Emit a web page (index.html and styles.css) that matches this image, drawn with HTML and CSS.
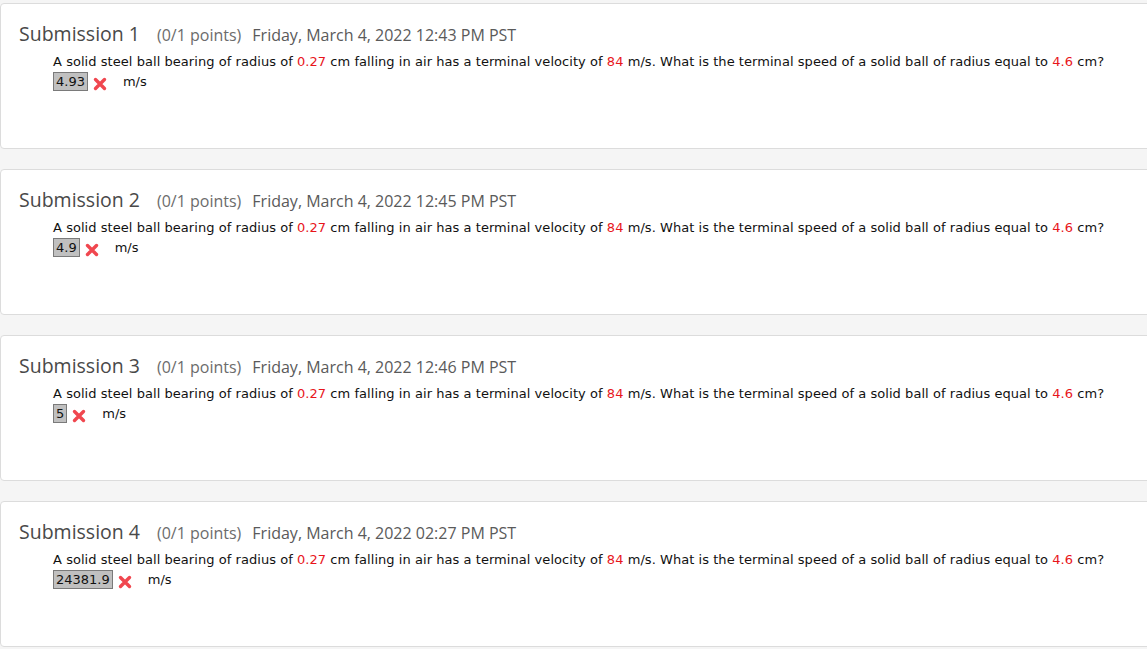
FILE: index.html
```html
<!DOCTYPE html>
<html>
<head>
<meta charset="utf-8">
<link rel="stylesheet" href="styles.css">
</head>
<body>
<div class="list">
  <div class="card">
    <div class="head"><span class="title">Submission 1</span><span class="pts">(0/1 points)</span><span class="date">Friday, March 4, 2022 12:43 PM PST</span></div>
    <div class="q">A solid steel ball bearing of radius of <span class="v">0.27</span> cm falling in air has a terminal velocity of <span class="v">84</span> m/s. What is the terminal speed of a solid ball of radius equal to <span class="v">4.6</span> cm?</div>
    <div class="ans"><span class="box">4.93</span><svg class="x" viewBox="0 0 14 14" width="14" height="14"><path d="M2.5 2.5 L11.5 11.5 M11.5 2.5 L2.5 11.5" stroke="#f0474f" stroke-width="3.4" stroke-linecap="round"/></svg><span class="unit">m/s</span></div>
  </div>
  <div class="card">
    <div class="head"><span class="title">Submission 2</span><span class="pts">(0/1 points)</span><span class="date">Friday, March 4, 2022 12:45 PM PST</span></div>
    <div class="q">A solid steel ball bearing of radius of <span class="v">0.27</span> cm falling in air has a terminal velocity of <span class="v">84</span> m/s. What is the terminal speed of a solid ball of radius equal to <span class="v">4.6</span> cm?</div>
    <div class="ans"><span class="box">4.9</span><svg class="x" viewBox="0 0 14 14" width="14" height="14"><path d="M2.5 2.5 L11.5 11.5 M11.5 2.5 L2.5 11.5" stroke="#f0474f" stroke-width="3.4" stroke-linecap="round"/></svg><span class="unit">m/s</span></div>
  </div>
  <div class="card">
    <div class="head"><span class="title">Submission 3</span><span class="pts">(0/1 points)</span><span class="date">Friday, March 4, 2022 12:46 PM PST</span></div>
    <div class="q">A solid steel ball bearing of radius of <span class="v">0.27</span> cm falling in air has a terminal velocity of <span class="v">84</span> m/s. What is the terminal speed of a solid ball of radius equal to <span class="v">4.6</span> cm?</div>
    <div class="ans"><span class="box">5</span><svg class="x" viewBox="0 0 14 14" width="14" height="14"><path d="M2.5 2.5 L11.5 11.5 M11.5 2.5 L2.5 11.5" stroke="#f0474f" stroke-width="3.4" stroke-linecap="round"/></svg><span class="unit">m/s</span></div>
  </div>
  <div class="card">
    <div class="head"><span class="title">Submission 4</span><span class="pts">(0/1 points)</span><span class="date">Friday, March 4, 2022 02:27 PM PST</span></div>
    <div class="q">A solid steel ball bearing of radius of <span class="v">0.27</span> cm falling in air has a terminal velocity of <span class="v">84</span> m/s. What is the terminal speed of a solid ball of radius equal to <span class="v">4.6</span> cm?</div>
    <div class="ans"><span class="box">24381.9</span><svg class="x" viewBox="0 0 14 14" width="14" height="14"><path d="M2.5 2.5 L11.5 11.5 M11.5 2.5 L2.5 11.5" stroke="#f0474f" stroke-width="3.4" stroke-linecap="round"/></svg><span class="unit">m/s</span></div>
  </div>
</div>
</body>
</html>
```
FILE: styles.css
```css
html, body {
  margin: 0;
  padding: 0;
  background: #f5f5f5;
  overflow: hidden;
}
.list {
  padding-top: 3px;
  display: flex;
  flex-direction: column;
  gap: 20px;
}
.card {
  width: 1170px;
  background: #fff;
  border: 1px solid #dcdcdc;
  border-radius: 4px;
  box-sizing: border-box;
  height: 146px;
  padding: 16px 0 0 18px;
}
.head {
  font-family: "Open Sans", sans-serif;
  color: #494949;
  display: flex;
  align-items: baseline;
  height: 28px;
}
.title {
  font-size: 19.5px;
  color: #494949;
}
.pts {
  font-size: 16px;
  color: #6c6c6c;
  margin-left: 17px;
}
.date {
  font-size: 16px;
  color: #5a5a5a;
  margin-left: 11px;
}
.q {
  font-family: "DejaVu Sans", Verdana, sans-serif;
  font-size: 13px;
  letter-spacing: 0.05px;
  color: #111;
  margin-left: 34px;
  margin-top: 5px;
  line-height: 18px;
}
.v {
  color: #e8151b;
}
.ans {
  font-family: "DejaVu Sans", Verdana, sans-serif;
  font-size: 13px;
  color: #111;
  margin-left: 34px;
  display: flex;
  align-items: center;
  height: 21px;
}
.box {
  background: #c0c0c0;
  border: 1px solid #7a7a7a;
  padding: 0 2px;
  height: 17px;
  line-height: 17px;
}
.x {
  margin-left: 5px;
  margin-top: 4px;
}
.unit {
  margin-left: 16px;
}
```
